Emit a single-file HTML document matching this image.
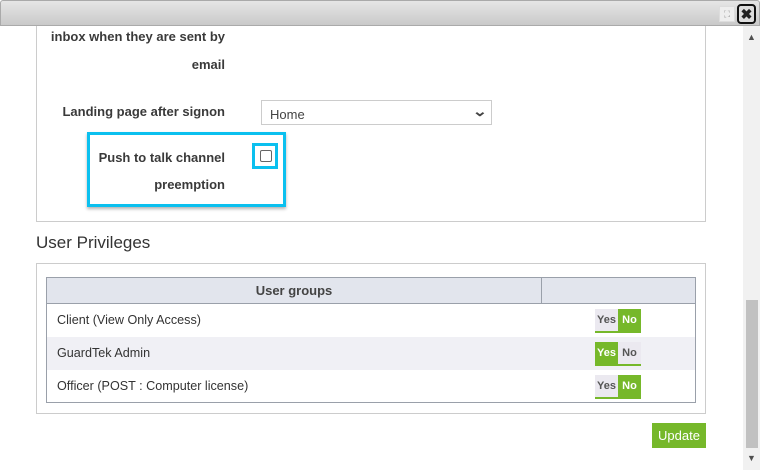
<!DOCTYPE html>
<html><head><style>
*{box-sizing:border-box;margin:0;padding:0}
body{width:760px;height:470px;overflow:hidden;background:#fff;font-family:"Liberation Sans",Arial,sans-serif;position:relative;color:#333}
.abs{position:absolute}
.title{left:0;top:0;width:760px;height:26px;background:linear-gradient(#e6e6e6,#c9c9c9);border:1px solid #aaa;border-radius:3px 3px 0 0}
.lbl{font-weight:bold;font-size:13px;color:#3a3a3a;text-align:right;width:225px;left:0}
.tg{position:absolute;width:46px;height:24px;display:flex;font-size:11px;font-weight:bold;border-bottom:2px solid #76b82a}
.tg span{flex:1;display:flex;align-items:center;justify-content:center}
.on{background:#76b82a;color:#fff}.off{background:#ebe9f0;color:#555}
td{font-size:12.6px}
</style></head><body>
<div class="abs title"></div>
<div class="abs" style="left:719px;top:6px;width:16px;height:16px;background:#eee;border:1px solid #ddd;font-size:9px;color:#999;text-align:center;line-height:14px">⛶</div>
<div class="abs" style="left:737px;top:4px;width:19px;height:20px;border:2px solid #111;border-radius:4px;background:#ddd;font-size:14px;font-weight:bold;text-align:center;line-height:16px;color:#222">✖</div>
<div class="abs" style="left:743px;top:26px;width:17px;height:444px;background:#f1f1f1"></div>
<div class="abs" style="left:746px;top:300px;width:12px;height:148px;background:#c1c1c1"></div>
<div class="abs" style="left:747px;top:32px;font-size:9px;color:#505050">▲</div>
<div class="abs" style="left:747px;top:453px;font-size:9px;color:#505050">▼</div>
<div class="abs" style="left:36px;top:26px;width:670px;height:196px;border:1px solid #ccc;border-top:none"></div>
<div class="abs lbl" style="top:29px">inbox when they are sent by</div>
<div class="abs lbl" style="top:57px">email</div>
<div class="abs lbl" style="top:104px">Landing page after signon</div>
<div class="abs" style="left:261px;top:100px;width:231px;height:25px;border:1px solid #ccc;font-size:13px;padding:6px 8px;color:#444">Home<span style="position:absolute;right:5px;top:2px;font-size:14px;font-weight:bold;transform:scaleX(1.3)">&#8964;</span></div>
<div class="abs" style="left:87px;top:132px;width:199px;height:75px;border:3px solid #0bc0ef;box-shadow:0 2px 3px rgba(0,0,0,.3)"></div>
<div class="abs lbl" style="top:150px">Push to talk channel</div>
<div class="abs lbl" style="top:177px">preemption</div>
<div class="abs" style="left:252px;top:143px;width:26px;height:26px;border:3px solid #0bc0ef"></div>
<div class="abs" style="left:260px;top:150px;width:12px;height:12px;border:1px solid #666;border-radius:2px"></div>
<div class="abs" style="left:36px;top:233px;font-size:17px;color:#333">User Privileges</div>
<div class="abs" style="left:36px;top:263px;width:670px;height:151px;border:1px solid #ccc"></div>
<table class="abs" style="left:46px;top:277px;width:650px;border-collapse:collapse;border:1px solid #9aa0aa">
<tr style="height:26px;background:#e2e5ed"><th style="font-size:13px;color:#444;border-right:1px solid #9aa0aa;border-bottom:1px solid #9aa0aa;width:495px">User groups</th><th style="border-bottom:1px solid #9aa0aa"></th></tr>
<tr style="height:33px"><td style="padding-left:10px">Client (View Only Access)</td><td></td></tr>
<tr style="height:33px;background:#f0f0f5"><td style="padding-left:10px">GuardTek Admin</td><td></td></tr>
<tr style="height:33px"><td style="padding-left:10px">Officer (POST : Computer license)</td><td></td></tr>
</table>
<div class="tg" style="left:595px;top:309px"><span class="off">Yes</span><span class="on">No</span></div>
<div class="tg" style="left:595px;top:342px"><span class="on">Yes</span><span class="off">No</span></div>
<div class="tg" style="left:595px;top:375px"><span class="off">Yes</span><span class="on">No</span></div>
<div class="abs" style="left:652px;top:423px;width:54px;height:25px;background:#76b82a;color:#fff;font-size:13px;text-align:center;line-height:25px">Update</div>
</body></html>
